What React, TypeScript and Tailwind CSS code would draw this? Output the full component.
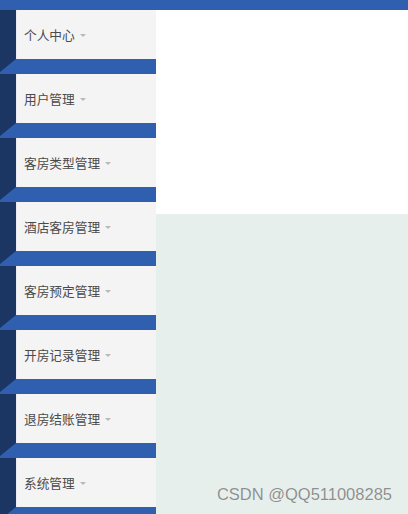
const menus = ['个人中心', '用户管理', '客房类型管理', '酒店客房管理', '客房预定管理', '开房记录管理', '退房结账管理', '系统管理'];

function MenuItem({ label }: { label: string }) {
  return (
    <div>
      <div className="flex h-[49px]">
        <div className="w-[16px] bg-[#1b3663]" />
        <div className="w-px bg-[#e8ecf2]" />
        <div className="flex flex-1 items-center bg-[#f4f4f4] pl-[7px] text-[12.7px] text-[#4a4a4a]">
          <span>{label}</span>
          <span className="ml-[5px] mt-[1px] h-0 w-0 border-x-[3.5px] border-t-[3.5px] border-x-transparent border-t-[#b8b8b8]" />
        </div>
      </div>
      <div className="relative h-[15px] bg-[#2f5fae]">
        <svg className="absolute left-0 top-0" width="16" height="15" viewBox="0 0 16 15">
          <polygon points="0,0 16,0 0,13" fill="#1b3663" />
        </svg>
      </div>
    </div>
  );
}

export default function App() {
  return (
    <div
      className="relative h-[514px] w-[408px] overflow-hidden bg-white"
      style={{ fontFamily: '"Noto Sans CJK SC", "Liberation Sans", sans-serif' }}
    >
      <div className="h-[10px] bg-[#2f5fae]" />
      <div className="flex">
        <div className="w-[156px] shrink-0">
          {menus.map((m) => (
            <MenuItem key={m} label={m} />
          ))}
        </div>
        <div className="flex flex-1 flex-col">
          <div className="h-[204px] bg-white" />
          <div className="h-[300px] bg-[#e6efeb]" />
        </div>
      </div>
      <div
        className="absolute bottom-[7px] right-[16px] text-[16.5px] text-[#8d8f8e]"
        style={{ fontFamily: '"Liberation Sans", Arial, sans-serif', textShadow: '0 0 1px #fff' }}
      >
        CSDN @QQ511008285
      </div>
    </div>
  );
}
